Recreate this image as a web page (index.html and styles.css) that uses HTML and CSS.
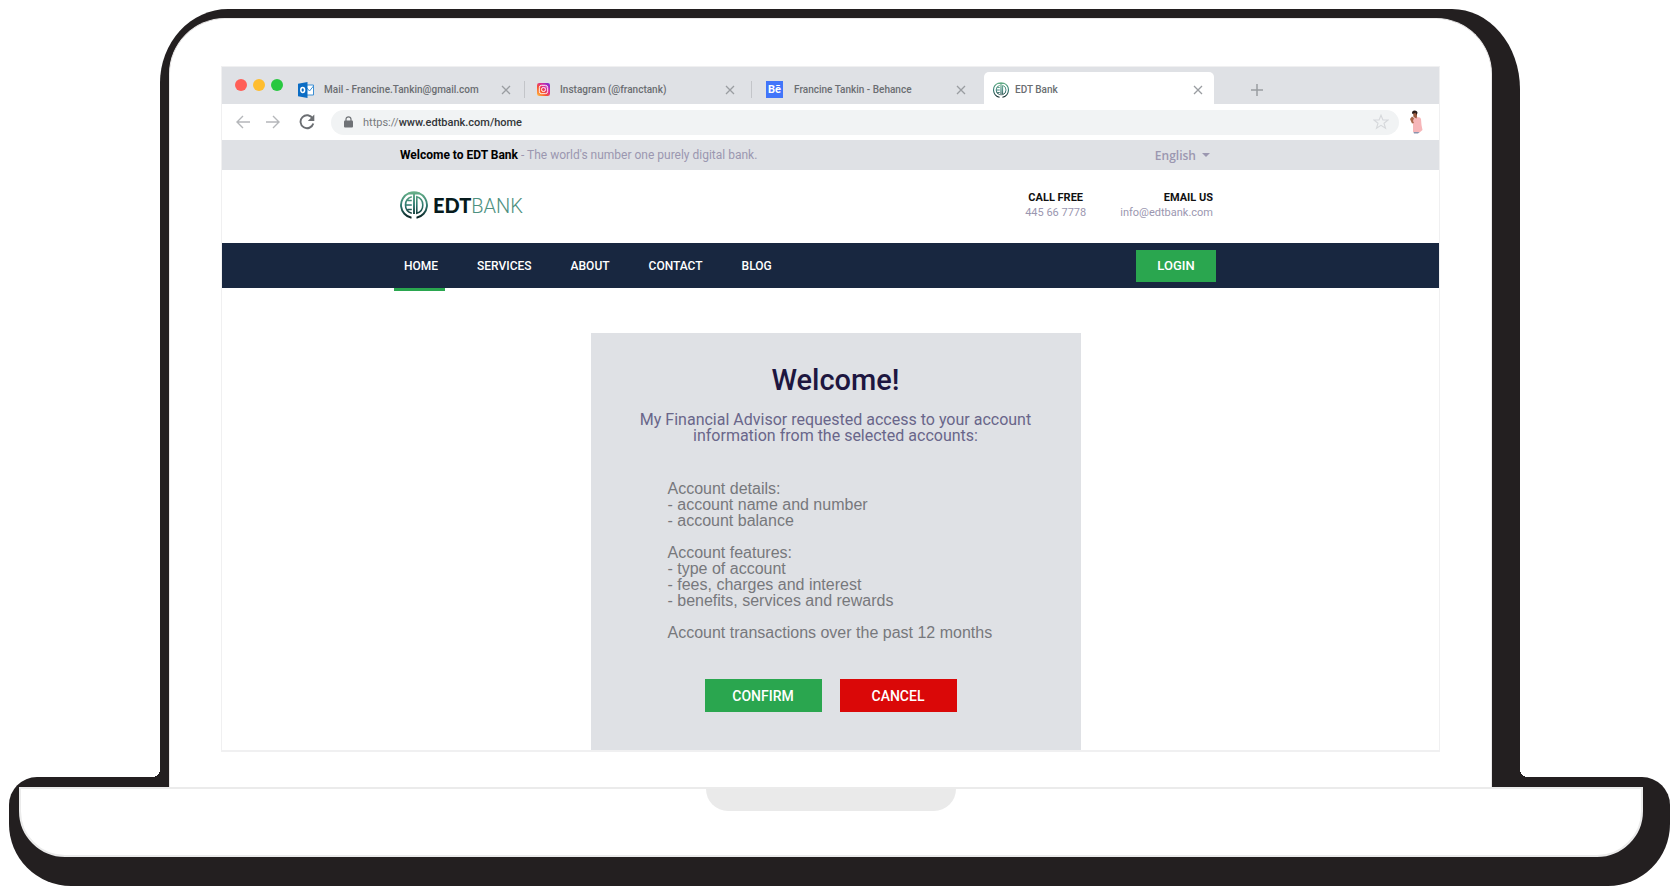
FILE: index.html
```html
<!DOCTYPE html>
<html lang="en">
<head>
  <meta charset="UTF-8" />
  <meta name="viewport" content="width=device-width, initial-scale=1" />
  <title>EDT Bank</title>
  <link rel="stylesheet" href="styles.css">
</head>
<body>
  <!-- shared shapes -->
  <svg class="defs" aria-hidden="true">
    <defs>
      <linearGradient id="logoFade" x1="0" y1="0" x2="0" y2="28" gradientUnits="userSpaceOnUse">
        <stop offset="0" stop-color="#6db58b" />
        <stop offset="0.5" stop-color="#2f7a70" />
        <stop offset="1" stop-color="#061a1c" />
      </linearGradient>
      <linearGradient id="instaFade" x1="0" y1="1" x2="1" y2="0">
        <stop offset="0" stop-color="#ffc64a" />
        <stop offset="0.35" stop-color="#f9572c" />
        <stop offset="0.65" stop-color="#d92a9b" />
        <stop offset="1" stop-color="#6a2fe0" />
      </linearGradient>
      <symbol id="mark" viewBox="0 0 28 28">
        <g fill="none" stroke="url(#logoFade)" stroke-width="1.9">
          <path d="M11.500 26.700A12.900 12.900 0 0 1 9 2.100Q14 .3 19 2.100A12.900 12.900 0 0 1 16.500 26.700" />
          <path d="M8.500 2.500H19.500M14 2.500V23" />
          <path d="M11.800 5.800Q5.500 7.500 5.500 14Q5.500 20.500 11.800 22.200M11.800 9.500H7.500M11.800 14H5.500M11.800 18.500H7.500" stroke-width="1.600" />
          <path d="M16.800 5.800Q22.800 7.500 22.800 14Q22.800 20.500 16.800 22.200Z" stroke-width="1.600" />
        </g>
      </symbol>
      <symbol id="close" viewBox="0 0 10 10">
        <path d="M1 1L9 9M9 1L1 9" fill="none" stroke="#9a9da1" stroke-width="1.3" />
      </symbol>
    </defs>
  </svg>

  <div class="laptop">
    <div class="lid">
      <div class="bezel">
        <div class="screen">

          <div class="tabs">
            <div class="lights"><span class="red"></span><span class="yellow"></span><span class="green"></span></div>
            <div class="tab tab-mail">
              <svg class="ico" viewBox="0 0 16 16"><path d="M8 3H15.500V13H8Z" fill="#fff" stroke="#3c8fd4" /><path d="M8 5L11.500 9L15.500 4" fill="none" stroke="#3c8fd4" /><path d="M0 1.700L9.500 0V16L0 14.300Z" fill="#0a6cc4" /><ellipse cx="4.700" cy="8" rx="1.900" ry="2.500" fill="none" stroke="#fff" stroke-width="1.500" /></svg>
              <span class="name">Mail - Francine.Tankin@gmail.com</span>
              <button class="close" aria-label="Close tab"><svg><use href="#close" /></svg></button>
            </div>
            <div class="tab tab-insta">
              <svg class="ico ico-small" viewBox="0 0 14 14"><rect width="14" height="14" rx="2.500" fill="url(#instaFade)" /><rect x="2.500" y="2.500" width="9" height="9" rx="2.500" fill="none" stroke="#fff" /><circle cx="7" cy="7" r="2.200" fill="none" stroke="#fff" /><circle cx="9.700" cy="4.300" r=".6" fill="#fff" /></svg>
              <span class="name">Instagram (@franctank)</span>
              <button class="close" aria-label="Close tab"><svg><use href="#close" /></svg></button>
            </div>
            <div class="tab tab-behance">
              <span class="be">Bē</span>
              <span class="name">Francine Tankin - Behance</span>
              <button class="close" aria-label="Close tab"><svg><use href="#close" /></svg></button>
            </div>
            <div class="tab tab-active">
              <svg class="ico"><use href="#mark" /></svg>
              <span class="name">EDT Bank</span>
              <button class="close" aria-label="Close tab"><svg><use href="#close" /></svg></button>
            </div>
            <button class="new-tab" aria-label="New tab"><svg viewBox="0 0 12 12"><path d="M6 0V12M0 6H12" stroke="#9a9da1" stroke-width="1.500" /></svg></button>
          </div>

          <div class="toolbar">
            <button class="tool" aria-label="Back"><svg viewBox="0 0 14 14"><path d="M14 7H1M7 1L1 7L7 13" fill="none" stroke="#b5b7ba" stroke-width="1.400" /></svg></button>
            <button class="tool" aria-label="Forward"><svg viewBox="0 0 14 14"><path d="M0 7H13M7 1L13 7L7 13" fill="none" stroke="#b5b7ba" stroke-width="1.400" /></svg></button>
            <button class="tool reload" aria-label="Reload"><svg viewBox="0 0 16 16"><path d="M13.700 4.500A6.500 6.500 0 1 0 14.300 9.500" fill="none" stroke="#6b6e72" stroke-width="1.900" /><path d="M15.300 .5V7H8.800Z" fill="#6b6e72" /></svg></button>
            <div class="address">
              <svg class="lock" viewBox="0 0 9 12"><rect y="4.500" width="9" height="7" rx="1" fill="#6f7276" /><path d="M2 5V3.300A2.500 2.500 0 0 1 7 3.300V5" fill="none" stroke="#6f7276" stroke-width="1.200" /></svg>
              <span class="url">https://<b>www.edtbank.com/home</b></span>
              <button class="star" aria-label="Bookmark"><svg viewBox="0 0 16 16"><path d="M8 1.200L9.900 6H15L11 9.200L12.500 14.300L8 11.300L3.500 14.300L5 9.200L1 6H6.100Z" fill="none" stroke="#d6d8db" stroke-width="1.100" /></svg></button>
            </div>
            <svg class="avatar" viewBox="0 0 14 24"><path d="M4 8L7 7L11 7.500L12 9L12.500 15L13.500 20L10.500 22.500L4 22L4 13Z" fill="#f6b6b9" /><path d="M1 9L3 6.500L5 8L4 11L5 13L3 13.500Z" fill="#a8674a" /><path d="M4 2.500H8V6.500L7.500 8.500L4.500 7Z" fill="#9a5a3e" /><path d="M3 3Q3 .5 5.500 .5Q8.500 .5 8.500 3L7.500 5L6.500 2.800L3.500 4Z" fill="#2a1c18" /><path d="M4.500 22H10.500L9 23.500H5Z" fill="#8a93ad" /></svg>
          </div>

          <div class="welcome-bar">
            <p><b>Welcome to EDT Bank</b> - The world's number one purely digital bank.</p>
            <button class="lang">English <span class="caret"></span></button>
          </div>

          <header class="brand-row">
            <a class="logo" href="#"><svg><use href="#mark" /></svg><span><b>EDT</b>BANK</span></a>
            <div class="contact call"><b>CALL FREE</b><span>445 66 7778</span></div>
            <div class="contact email"><b>EMAIL US</b><span>info@edtbank.com</span></div>
          </header>

          <nav class="menu">
            <a class="active" href="#">HOME</a>
            <a href="#">SERVICES</a>
            <a href="#">ABOUT</a>
            <a href="#">CONTACT</a>
            <a href="#">BLOG</a>
            <button class="login">LOGIN</button>
          </nav>

          <main class="card">
            <h1>Welcome!</h1>
            <p class="intro">My Financial Advisor requested access to your account<br>information from the selected accounts:</p>
            <div class="access">
              <p>Account details:<br>- account name and number<br>- account balance</p>
              <p>Account features:<br>- type of account<br>- fees, charges and interest<br>- benefits, services and rewards</p>
              <p>Account transactions over the past 12 months</p>
            </div>
            <div class="actions">
              <button class="confirm">CONFIRM</button>
              <button class="cancel">CANCEL</button>
            </div>
          </main>
        </div>
      </div>
    </div>
    <div class="base">
      <div class="deck"><div class="notch"></div></div>
    </div>
  </div>
</body>
</html>
```

FILE: styles.css
```css
* {
  box-sizing: border-box;
}

body {
  margin: 0;
  background: #fff;
  font-family: Roboto, sans-serif;
}

p, h1 {
  margin: 0;
}

button {
  border: 0;
  padding: 0;
  background: none;
  font-family: inherit;
  cursor: pointer;
}

a {
  text-decoration: none;
}

svg {
  display: block;
}

.defs {
  position: absolute;
  width: 0;
  height: 0;
}

/* laptop body */
.laptop {
  padding: 9px 10px 9px 9px;
}

.lid {
  position: relative;
  margin: 0 150px 0 151px;
  padding: 9px 28px 0 9px;
  background: #231f20;
  border-radius: 68px 68px 0 0 / 74px 80px 0 0;
}

/* small rounded joints where the lid meets the base */
.lid::before,
.lid::after {
  content: "";
  position: absolute;
  bottom: 10px;
  width: 8px;
  height: 8px;
}

.lid::before {
  left: -8px;
  background: radial-gradient(circle at 0 0, #fff 8px, #231f20 8px);
}

.lid::after {
  right: -8px;
  background: radial-gradient(circle at 100% 0, #fff 8px, #231f20 8px);
}

.bezel {
  padding: 47px 51px 35px 51px;
  background: #fff;
  border: 1px solid #eae8e8;
  border-bottom: 0;
  border-radius: 56px 56px 0 0;
}

.screen {
  border: 1px solid #f0f0f1;
  border-bottom-width: 2px;
}

.base {
  margin-top: -10px;
  padding: 10px 27px 29px 10px;
  background: #231f20;
  border-radius: 28px 28px 62px 62px;
}

.deck {
  height: 70px;
  background: #fff;
  border: 2px solid #ebebeb;
  border-radius: 0 0 46px 46px;
}

.notch {
  width: 250px;
  height: 22px;
  margin: 0 auto;
  background: #eaeaea;
  border-radius: 0 0 28px 28px;
}

/* browser tabs */
.tabs {
  display: flex;
  align-items: flex-end;
  height: 37px;
  padding-left: 13px;
  background: #dfe1e5;
}

.lights {
  display: flex;
  gap: 6px;
  width: 61px;
  height: 25px;
}

.lights span {
  width: 12px;
  height: 12px;
  border-radius: 50%;
}

.red { background: #ff5f57; }
.yellow { background: #ffbd2e; }
.green { background: #28c840; }

.tab {
  position: relative;
  display: flex;
  align-items: center;
  height: 32px;
  padding-top: 3px;
  color: #6b6e72;
  font-size: 10px;
  font-weight: 500;
}

.name {
  flex: 1;
  white-space: nowrap;
}

.ico {
  width: 16px;
  height: 16px;
}

.ico-small {
  width: 13px;
  height: 13px;
}

.close svg {
  width: 10px;
  height: 10px;
}

.tab-mail {
  width: 228px;
  padding-left: 2px;
  padding-right: 13px;
}

.tab-mail .ico { margin-right: 10px; }

.tab-insta,
.tab-behance {
  width: 227px;
  padding-left: 13px;
}

.tab-insta {
  padding-right: 16px;
}

.tab-insta .ico { margin-right: 10px; }

.tab-insta::before,
.tab-behance::before {
  content: "";
  position: absolute;
  left: 0;
  top: 9px;
  width: 1px;
  height: 17px;
  background: #c3c5c9;
}

.tab-behance {
  width: 233px;
  padding-left: 15px;
  padding-right: 18px;
}

.be {
  width: 17px;
  height: 17px;
  margin-right: 11px;
  background: #4175fa;
  color: #fff;
  font-size: 11px;
  font-weight: 700;
  line-height: 17px;
  text-align: center;
}

.tab-active {
  width: 230px;
  padding-left: 9px;
  padding-right: 11px;
  background: #fff;
  border-radius: 5px 5px 0 0;
}

.tab-active .ico { margin-right: 6px; }

.new-tab {
  margin: 0 0 8px 37px;
}

.new-tab svg {
  width: 12px;
  height: 12px;
}

/* address row */
.toolbar {
  display: flex;
  align-items: center;
  height: 36px;
  padding: 0 16px 0 14px;
  background: #fff;
}

.tool {
  margin-right: 16px;
}

.tool svg {
  width: 14px;
  height: 14px;
}

.reload svg {
  width: 16px;
  height: 16px;
}

.reload {
  margin-left: 3px;
}

.address {
  display: flex;
  flex: 1;
  align-items: center;
  height: 25px;
  padding: 0 10px 0 13px;
  background: #f1f3f4;
  border-radius: 13px;
}

.lock {
  width: 9px;
  height: 12px;
  margin-right: 10px;
}

.url {
  flex: 1;
  color: #777a7e;
  font-size: 11px;
}

.url b {
  color: #333639;
  font-weight: 500;
}

.star svg {
  width: 16px;
  height: 16px;
}

.avatar {
  width: 14px;
  height: 24px;
  margin-left: 10px;
}

/* bank site */
.welcome-bar,
.brand-row,
.menu {
  display: flex;
  align-items: center;
  padding: 0 226px 0 178px;
}

.welcome-bar {
  justify-content: space-between;
  height: 30px;
  background: #dfe1e5;
  color: #9b97b0;
  font-size: 12px;
}

.welcome-bar b {
  color: #000;
  font-weight: 700;
}

.lang {
  display: flex;
  align-items: center;
  gap: 6px;
  padding-right: 3px;
  color: #9b97b0;
  font-family: "Open Sans", sans-serif;
  font-size: 12px;
  font-weight: 600;
}

.caret {
  border: 4px solid transparent;
  border-top-color: #9b97b0;
  border-bottom: 0;
}

.brand-row {
  height: 73px;
  padding-bottom: 3px;
}

.logo {
  display: flex;
  align-items: center;
  gap: 5px;
  margin-right: auto;
  color: #4d9080;
  font-size: 20px;
  font-weight: 300;
}

.logo svg {
  width: 28px;
  height: 28px;
}

.logo b {
  color: #061a1c;
  font-family: Lato, sans-serif;
  font-weight: 900;
}

.contact {
  display: flex;
  flex-direction: column;
  color: #9b97b0;
  font-size: 11px;
  line-height: 15px;
}

.contact b {
  color: #111;
  font-weight: 700;
}

.call {
  align-items: center;
}

.email {
  align-items: flex-end;
  margin-left: 34px;
}

.menu {
  gap: 39px;
  height: 45px;
  padding-left: 182px;
  padding-right: 223px;
  background: #182740;
}

.menu a {
  position: relative;
  color: #fff;
  font-size: 12px;
  font-weight: 500;
}

.menu .active::after {
  content: "";
  position: absolute;
  left: -10px;
  right: -7px;
  top: 29px;
  height: 3px;
  background: #2aa64f;
}

.login {
  width: 80px;
  height: 32px;
  margin-left: auto;
  background: #2aa64f;
  color: #fff;
  font-size: 13px;
  font-weight: 500;
}

/* consent card, sits a little right of centre */
.card {
  width: 490px;
  margin: 45px 0 0 calc(50% - 240px);
  padding: 28px 0 38px;
  background: #dfe1e5;
}

.card h1 {
  color: #1d1640;
  font-size: 29px;
  font-weight: 500;
  line-height: 38px;
  text-align: center;
}

.intro {
  margin-top: 13px;
  color: #69668a;
  font-size: 16px;
  line-height: 16px;
  text-align: center;
}

.access {
  margin: 37px 0 0 77px;
  color: #77787c;
  font-family: "Liberation Sans", Arial, sans-serif;
  font-size: 16px;
  line-height: 16px;
}

.access p + p {
  margin-top: 16px;
}

.actions {
  display: flex;
  gap: 18px;
  margin: 38px 0 0 114px;
}

.actions button {
  width: 117px;
  height: 33px;
  color: #fff;
  font-size: 14px;
  font-weight: 500;
}

.actions .confirm { background: #2aa64f; }
.actions .cancel { background: #da0808; }
```
